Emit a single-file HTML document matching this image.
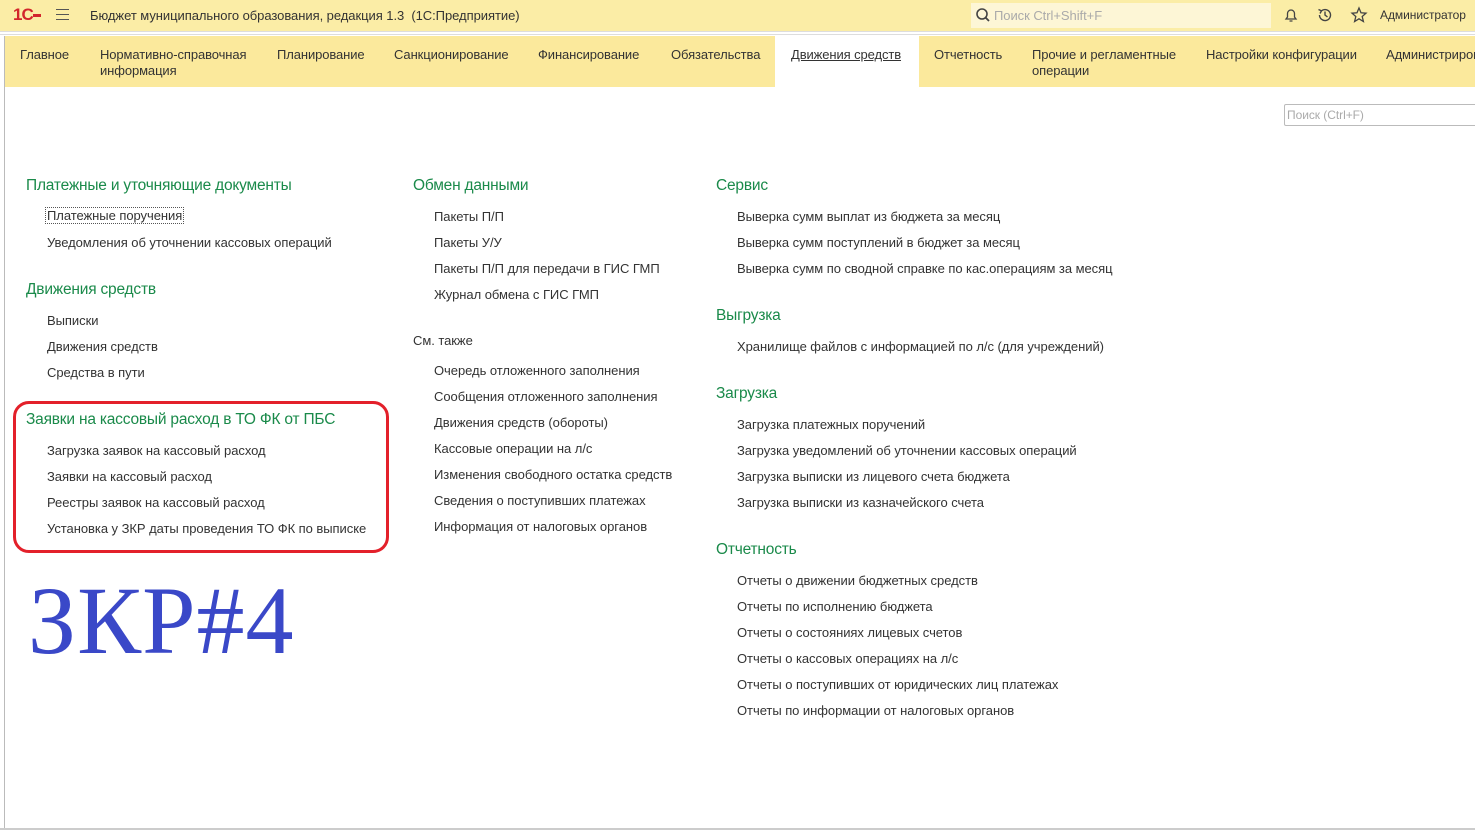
<!DOCTYPE html>
<html><head><meta charset="utf-8"><style>
*{margin:0;padding:0;box-sizing:border-box}
body{width:1475px;height:830px;background:#fff;font-family:"Liberation Sans",Arial,sans-serif;position:relative;overflow:hidden;color:#333}
.top{position:absolute;left:0;top:0;width:1475px;height:31px;background:#fbeda6}
.sep{position:absolute;left:0;top:31px;width:1475px;height:4px;background:#fff;border-top:1px solid #ddd;border-bottom:1px solid #ddd}
.tabs{position:absolute;left:5px;top:36px;width:1470px;height:51px;background:#fbe99c}
.t{position:absolute;top:11px;font-size:13px;color:#333;line-height:16px;letter-spacing:-0.1px}
.act{position:absolute;left:770px;top:0;width:144px;height:51px;background:#fff}
.a{position:absolute;font-size:13px;color:#333;white-space:nowrap;letter-spacing:-0.05px}
.h{position:absolute;font-size:15.5px;color:#1a8a4a;white-space:nowrap;letter-spacing:-0.2px}
.abs{position:absolute}
</style></head><body>
<div class="top"></div>
<div class="abs" style="left:13px;top:5px;font-size:17px;font-weight:bold;color:#d2262c;letter-spacing:-1px">1C<span style="display:inline-block;width:8px;height:3px;background:#d2262c;vertical-align:middle"></span></div>
<div class="abs" style="left:56px;top:9px;width:13px;height:11px;border-top:1.5px solid #555;border-bottom:1.5px solid #555"><div style="margin-top:3.5px;height:1.5px;background:#555"></div></div>
<div class="a" style="left:90px;top:8px;color:#333">Бюджет муниципального образования, редакция 1.3&nbsp; (1С:Предприятие)</div>
<div class="abs" style="left:971px;top:3px;width:300px;height:25px;background:#fdf6d6"></div>
<svg class="abs" style="left:975px;top:7px" width="16" height="16"><circle cx="7" cy="7" r="5" fill="none" stroke="#444" stroke-width="1.6"/><line x1="10.5" y1="10.5" x2="14" y2="14" stroke="#444" stroke-width="1.8"/></svg>
<div class="a" style="left:994px;top:8px;color:#aaa">Поиск Ctrl+Shift+F</div>
<svg class="abs" style="left:1282px;top:6px" width="18" height="18"><path d="M4 13 L5.5 11 V7.5 A3.5 3.5 0 0 1 12.5 7.5 V11 L14 13 Z M7.5 15 H10.5" fill="none" stroke="#444" stroke-width="1.3"/></svg>
<svg class="abs" style="left:1316px;top:6px" width="18" height="18"><path d="M3.5 9 A5.5 5.5 0 1 0 5.5 4.8 M2.5 3.5 L5.5 4.8 L4 7.5 M9 5.5 V9 L11.5 11" fill="none" stroke="#444" stroke-width="1.4"/></svg>
<svg class="abs" style="left:1350px;top:6px" width="18" height="18"><path d="M9 2 L11 6.8 L16 7.2 L12.2 10.5 L13.4 15.5 L9 12.8 L4.6 15.5 L5.8 10.5 L2 7.2 L7 6.8 Z" fill="none" stroke="#444" stroke-width="1.3"/></svg>
<div class="a" style="left:1380px;top:8px;font-size:12px">Администратор</div>
<div class="sep"></div>
<div class="abs" style="left:4px;top:36px;width:1px;height:794px;background:#bbb"></div>
<div class="tabs">
<div class="act"></div>
<div class="t" style="left:15px">Главное</div>
<div class="t" style="left:95px">Нормативно-справочная<br>информация</div>
<div class="t" style="left:272px">Планирование</div>
<div class="t" style="left:389px">Санкционирование</div>
<div class="t" style="left:533px">Финансирование</div>
<div class="t" style="left:666px">Обязательства</div>
<div class="t" style="left:786px;text-decoration:underline">Движения средств</div>
<div class="t" style="left:929px">Отчетность</div>
<div class="t" style="left:1027px">Прочие и регламентные<br>операции</div>
<div class="t" style="left:1201px">Настройки конфигурации</div>
<div class="t" style="left:1381px;white-space:nowrap">Администрирование</div>
</div>
<div class="abs" style="left:1284px;top:104px;width:195px;height:22px;border:1px solid #bbb;border-radius:2px"></div>
<div class="a" style="left:1287px;top:108px;font-size:12px;color:#aaa">Поиск (Ctrl+F)</div>

<div class="h" style="left:26px;top:177px">Платежные и уточняющие документы</div>
<div class="a" style="left:45px;top:207px;border:1px dotted #555;padding:0 1px">Платежные поручения</div>
<div class="a" style="left:47px;top:235px">Уведомления об уточнении кассовых операций</div>
<div class="h" style="left:26px;top:281px">Движения средств</div>
<div class="a" style="left:47px;top:313px">Выписки</div>
<div class="a" style="left:47px;top:339px">Движения средств</div>
<div class="a" style="left:47px;top:365px">Средства в пути</div>
<div class="abs" style="left:13px;top:401px;width:376px;height:152px;border:3px solid #e3202a;border-radius:16px"></div>
<div class="h" style="left:26px;top:411px">Заявки на кассовый расход в ТО ФК от ПБС</div>
<div class="a" style="left:47px;top:443px">Загрузка заявок на кассовый расход</div>
<div class="a" style="left:47px;top:469px">Заявки на кассовый расход</div>
<div class="a" style="left:47px;top:495px">Реестры заявок на кассовый расход</div>
<div class="a" style="left:47px;top:521px">Установка у ЗКР даты проведения ТО ФК по выписке</div>
<div class="abs" style="left:28px;top:571px;font-family:'Liberation Serif',serif;font-size:96px;line-height:100px;color:#3a48c8;white-space:nowrap;letter-spacing:1px">ЗКР#4</div>

<div class="h" style="left:413px;top:177px">Обмен данными</div>
<div class="a" style="left:434px;top:209px">Пакеты П/П</div>
<div class="a" style="left:434px;top:235px">Пакеты У/У</div>
<div class="a" style="left:434px;top:261px">Пакеты П/П для передачи в ГИС ГМП</div>
<div class="a" style="left:434px;top:287px">Журнал обмена с ГИС ГМП</div>
<div class="a" style="left:413px;top:333px">См. также</div>
<div class="a" style="left:434px;top:363px">Очередь отложенного заполнения</div>
<div class="a" style="left:434px;top:389px">Сообщения отложенного заполнения</div>
<div class="a" style="left:434px;top:415px">Движения средств (обороты)</div>
<div class="a" style="left:434px;top:441px">Кассовые операции на л/с</div>
<div class="a" style="left:434px;top:467px">Изменения свободного остатка средств</div>
<div class="a" style="left:434px;top:493px">Сведения о поступивших платежах</div>
<div class="a" style="left:434px;top:519px">Информация от налоговых органов</div>

<div class="h" style="left:716px;top:177px">Сервис</div>
<div class="a" style="left:737px;top:209px">Выверка сумм выплат из бюджета за месяц</div>
<div class="a" style="left:737px;top:235px">Выверка сумм поступлений в бюджет за месяц</div>
<div class="a" style="left:737px;top:261px">Выверка сумм по сводной справке по кас.операциям за месяц</div>
<div class="h" style="left:716px;top:307px">Выгрузка</div>
<div class="a" style="left:737px;top:339px">Хранилище файлов с информацией по л/с (для учреждений)</div>
<div class="h" style="left:716px;top:385px">Загрузка</div>
<div class="a" style="left:737px;top:417px">Загрузка платежных поручений</div>
<div class="a" style="left:737px;top:443px">Загрузка уведомлений об уточнении кассовых операций</div>
<div class="a" style="left:737px;top:469px">Загрузка выписки из лицевого счета бюджета</div>
<div class="a" style="left:737px;top:495px">Загрузка выписки из казначейского счета</div>
<div class="h" style="left:716px;top:541px">Отчетность</div>
<div class="a" style="left:737px;top:573px">Отчеты о движении бюджетных средств</div>
<div class="a" style="left:737px;top:599px">Отчеты по исполнению бюджета</div>
<div class="a" style="left:737px;top:625px">Отчеты о состояниях лицевых счетов</div>
<div class="a" style="left:737px;top:651px">Отчеты о кассовых операциях на л/с</div>
<div class="a" style="left:737px;top:677px">Отчеты о поступивших от юридических лиц платежах</div>
<div class="a" style="left:737px;top:703px">Отчеты по информации от налоговых органов</div>
<div class="abs" style="left:0;top:828px;width:1475px;height:2px;background:#ccc"></div>
</body></html>
